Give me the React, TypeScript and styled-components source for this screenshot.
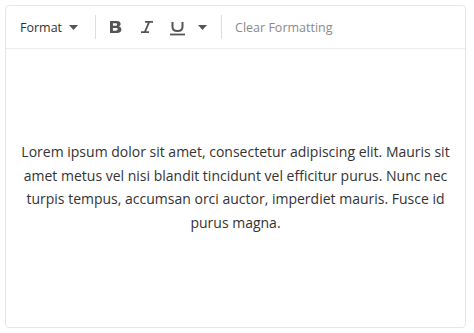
import styled, { createGlobalStyle } from "styled-components";

const Global = createGlobalStyle`
  html, body { margin: 0; padding: 0; background: #fff; }
  body { font-family: "Open Sans", "Noto Sans", sans-serif; }
`;

const Editor = styled.div`
  margin: 5px 0 0 5px;
  width: 461px;
  height: 323px;
  box-sizing: border-box;
  border: 1px solid #e6e6e6;
  border-radius: 4px;
  display: flex;
  flex-direction: column;
  background: #fff;
`;

const Toolbar = styled.div`
  height: 43px;
  flex: none;
  box-sizing: border-box;
  border-bottom: 1px solid #ececec;
  display: flex;
  align-items: center;
  padding: 0 0 0 14px;
`;

const Tool = styled.button<{ $pad?: string; $gap?: number }>`
  border: none;
  background: none;
  display: flex;
  align-items: center;
  gap: ${(p) => p.$gap ?? 0}px;
  padding: ${(p) => p.$pad ?? "0"};
  margin: 0;
  height: 30px;
  color: #333;
  font-family: inherit;
  font-size: 12.5px;
  cursor: pointer;
`;

const Muted = styled(Tool)`
  color: #8a8a8a;
`;

const Divider = styled.span`
  width: 1px;
  height: 24px;
  background: #dedede;
  margin: 0 13px;
`;

const Content = styled.div`
  flex: 1;
  display: flex;
  align-items: center;
  justify-content: center;
  padding: 0 12px 2px;
`;

const Para = styled.p`
  margin: 0;
  text-align: center;
  color: #333;
  font-size: 14px;
  line-height: 23.5px;
`;

const Caret = () => (
  <svg width="9" height="5" viewBox="0 0 9 5">
    <path d="M0 0h9L4.5 5z" fill="#555" />
  </svg>
);

const BoldIcon = () => (
  <svg width="14" height="12" viewBox="0 0 14 12">
    <path
      fillRule="evenodd"
      d="M1 0h6.6c2.6 0 4 1.1 4 3 0 1.2-.7 2.1-1.8 2.5 1.5.3 2.6 1.4 2.6 3 0 2.2-1.6 3.5-4.4 3.5H1zM3.9 2.2v2.6h2.6c1 0 1.6-.5 1.6-1.3S7.5 2.2 6.5 2.2zm0 4.7v2.9h2.9c1.2 0 1.8-.5 1.8-1.45S8.6 6.9 7.4 6.9z"
      fill="#555"
    />
  </svg>
);

const ItalicIcon = () => (
  <svg width="12" height="12" viewBox="0 0 12 12">
    <path d="M4 .9h8M0 11.1h8M8.2 .9 3.8 11.1" stroke="#555" strokeWidth="1.8" fill="none" />
  </svg>
);

const UnderlineIcon = () => (
  <svg width="15" height="15" viewBox="0 0 15 15" style={{ marginTop: 2 }}>
    <path d="M2.5 1v4.8c0 2.6 2 4.2 5 4.2s5-1.6 5-4.2V1" stroke="#555" strokeWidth="2" fill="none" />
    <path d="M0 13.5h15" stroke="#555" strokeWidth="1.8" />
  </svg>
);

export default function App() {
  return (
    <>
      <Global />
      <Editor>
        <Toolbar>
          <Tool $pad="0 4px 0 0" $gap={7}>
            Format <Caret />
          </Tool>
          <Divider />
          <Tool $pad="0 9px 0 0">
            <BoldIcon />
          </Tool>
          <Tool $pad="0 8px 0 9px">
            <ItalicIcon />
          </Tool>
          <Tool $pad="0 1px 0 9px" $gap={13}>
            <UnderlineIcon />
            <Caret />
          </Tool>
          <Divider />
          <Muted>Clear Formatting</Muted>
        </Toolbar>
        <Content>
          <Para>
            Lorem ipsum dolor sit amet, consectetur adipiscing elit. Mauris sit amet metus vel nisi blandit
            tincidunt vel efficitur purus. Nunc nec turpis tempus, accumsan orci auctor, imperdiet mauris.
            Fusce id purus magna.
          </Para>
        </Content>
      </Editor>
    </>
  );
}
